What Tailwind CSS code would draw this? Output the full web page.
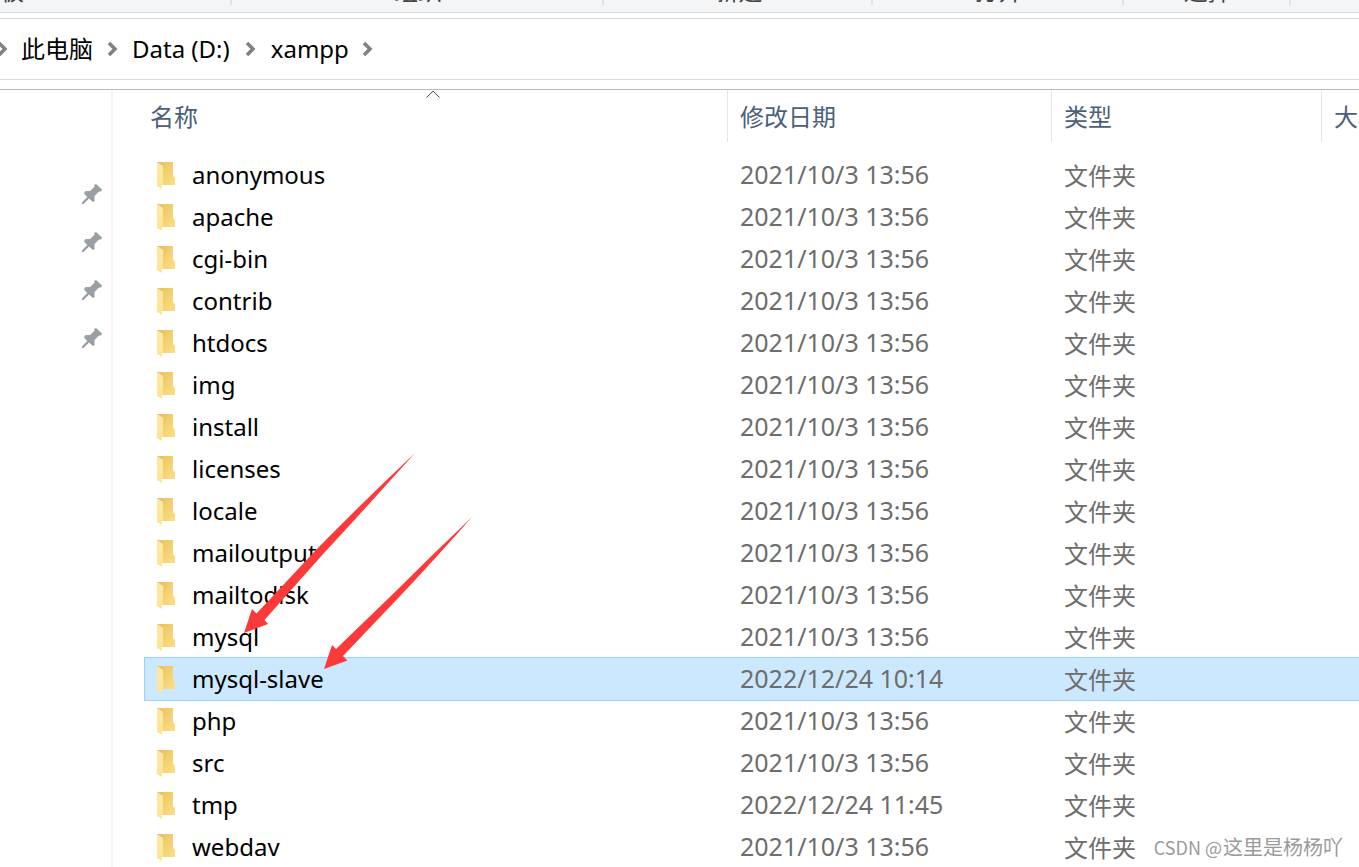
<!DOCTYPE html>
<html lang="zh-CN">
<head>
    <meta charset="UTF-8">
    <meta name="viewport" content="width=device-width, initial-scale=1.0">
    <title>xampp</title>
    <script src="https://cdn.jsdelivr.net/npm/@tailwindcss/browser@4"></script>
</head>
<body class="relative flex flex-col h-screen overflow-hidden bg-white text-black font-['Noto_Sans','Noto_Sans_CJK_SC',sans-serif]">

    <!-- icons -->
    <svg class="absolute w-0 h-0">
        <defs>
            <linearGradient id="folder-back" x1="0" y1="0" x2="1" y2="1">
                <stop offset="0" stop-color="#e9c05c"/>
                <stop offset="1" stop-color="#fddf86"/>
            </linearGradient>
            <linearGradient id="folder-front" x1="0" y1="0" x2="0" y2="1">
                <stop offset="0" stop-color="#ffe9a6"/>
                <stop offset="1" stop-color="#ffe394"/>
            </linearGradient>
        </defs>
        <symbol id="chevron" viewBox="0 0 12 16">
            <path d="M2 2 8 8 2 14" fill="none" stroke="#808080" stroke-width="3.500"/>
        </symbol>
        <symbol id="pin" viewBox="0 0 20 20">
            <path d="M14 0 20 5.500 19 7.500 17 7.500 12.500 12 12.500 17 11 18 7 14.500 1.500 20 0 20 0 18.500 5.200 13 2 9.500 3 7.200 8 7 12.300 3 12.300 1Z" fill="#969fa6"/>
        </symbol>
    </svg>

    <!-- ribbon group names -->
    <div class="flex items-end shrink-0 h-[13px] overflow-hidden bg-[#f4f5f7] border-b border-[#d9d9d9] text-2xl leading-6 text-[#444]">
        <div class="shrink-0 flex items-end justify-center w-[488px] -ml-[256px] h-8 pb-[9px] relative">剪贴板<span class="absolute right-0 bottom-[7px] w-[2px] h-6 bg-[#e1e2e4]"></span></div>
        <div class="shrink-0 flex items-end justify-center w-[372px] h-8 pb-[9px] relative">组织<span class="absolute right-0 bottom-[7px] w-[2px] h-6 bg-[#e1e2e4]"></span></div>
        <div class="shrink-0 flex items-end justify-center w-[269px] h-8 pb-[9px] relative">新建<span class="absolute right-0 bottom-[7px] w-[2px] h-6 bg-[#e1e2e4]"></span></div>
        <div class="shrink-0 flex items-end justify-center w-[251px] h-8 pb-[9px] relative">打开<span class="absolute right-0 bottom-[7px] w-[2px] h-6 bg-[#e1e2e4]"></span></div>
        <div class="shrink-0 flex items-end justify-center w-[167px] h-8 pb-[9px] relative">选择<span class="absolute right-0 bottom-[7px] w-[2px] h-6 bg-[#e1e2e4]"></span></div>
    </div>

    <!-- address bar -->
    <nav class="flex items-center shrink-0 h-[62px] mt-[5px] border-y border-[#d9d9d9] text-2xl">
        <svg class="w-3 h-4 -ml-[3px] mr-3"><use href="#chevron"/></svg>
        <a href="#">此电脑</a>
        <svg class="w-3 h-4 ml-[14px] mr-[13px]"><use href="#chevron"/></svg>
        <a href="#">Data (D:)</a>
        <svg class="w-3 h-4 ml-[15px] mr-[14px]"><use href="#chevron"/></svg>
        <a href="#">xampp</a>
        <svg class="w-3 h-4 ml-[13px]"><use href="#chevron"/></svg>
    </nav>

    <div class="flex grow min-h-0 mt-[9px] border-t border-[#b9b9b9]">
        <aside class="shrink-0 w-[113px] pt-20 pr-[9px] border-r-2 border-[#f5f5f5]">
            <div class="flex items-center justify-end h-12"><svg class="w-5 h-5"><use href="#pin"/></svg></div>
            <div class="flex items-center justify-end h-12"><svg class="w-5 h-5"><use href="#pin"/></svg></div>
            <div class="flex items-center justify-end h-12"><svg class="w-5 h-5"><use href="#pin"/></svg></div>
            <div class="flex items-center justify-end h-12"><svg class="w-5 h-5"><use href="#pin"/></svg></div>
        </aside>

        <main class="grow min-w-0 overflow-hidden pl-8">
            <table class="w-full table-fixed border-separate border-spacing-0 text-left">
                <colgroup>
                    <col class="w-[583px]">
                    <col class="w-[324px]">
                    <col class="w-[270px]">
                    <col>
                </colgroup>
                <thead class="text-2xl text-[#4c607a]">
                    <tr class="h-[52px]">
                        <th class="relative p-0 pl-[5px] pt-px font-normal border-r border-[#e5e5e5]">
                            <svg class="absolute top-0 left-[281px] w-[14px] h-2" viewBox="0 0 14 8"><path d="M.5 7.500 7 1.200 13.500 7.500" fill="none" stroke="#444"/></svg>
                            <button type="button">名称</button>
                        </th>
                        <th class="p-0 pl-3 pt-px font-normal border-r border-[#e5e5e5]"><button type="button">修改日期</button></th>
                        <th class="p-0 pl-3 pt-px font-normal border-r border-[#e5e5e5]"><button type="button">类型</button></th>
                        <th class="p-0 pl-3 pt-px font-normal whitespace-nowrap overflow-hidden"><button type="button">大小</button></th>
                    </tr>
                    <tr class="h-3"><td colspan="4" class="p-0"></td></tr>
                </thead>
                <tbody id="file-list"></tbody>
            </table>
        </main>
    </div>

    <!-- arrows drawn over the list -->
    <svg class="absolute top-0 left-0 w-[500px] h-[700px] pointer-events-none" viewBox="0 0 500 700" fill="#fc3a39">
        <path d="M415 453 Q364 510 324 553 L264.500 620 268 624 244 633 252 609 256.500 613.500 315 551 Q362 503 415 453Z"/>
        <path d="M472 517 Q436 558 402 594 L343 656 347.500 660.500 324 669 332 645 336 649 395 592 Q434 553 472 517Z"/>
    </svg>

    <div class="absolute right-4 bottom-1 flex items-baseline gap-px text-[20px] leading-8 text-[#9a9a9a] font-['Noto_Sans_CJK_SC',sans-serif]">
        <span class="text-[18px]">CSDN @</span><span>这里是杨杨吖</span>
    </div>

    <script>
        const files = [
            ['anonymous', '2021/10/3 13:56'],
            ['apache', '2021/10/3 13:56'],
            ['cgi-bin', '2021/10/3 13:56'],
            ['contrib', '2021/10/3 13:56'],
            ['htdocs', '2021/10/3 13:56'],
            ['img', '2021/10/3 13:56'],
            ['install', '2021/10/3 13:56'],
            ['licenses', '2021/10/3 13:56'],
            ['locale', '2021/10/3 13:56'],
            ['mailoutput', '2021/10/3 13:56'],
            ['mailtodisk', '2021/10/3 13:56'],
            ['mysql', '2021/10/3 13:56'],
            ['mysql-slave', '2022/12/24 10:14'],
            ['php', '2021/10/3 13:56'],
            ['src', '2021/10/3 13:56'],
            ['tmp', '2022/12/24 11:45'],
            ['webdav', '2021/10/3 13:56']
        ];
        const selected = 'mysql-slave';

        document.getElementById('file-list').innerHTML = files.map(([name, date]) => `
            <tr class="h-[42px] text-2xl leading-8 text-[#6d6d6d] ${name === selected ? 'bg-[#cce8ff] outline outline-[#99d1ff]' : ''}">
                <td class="p-0 pl-3">
                    <div class="flex items-center gap-[17px] text-black">
                        <svg class="w-[18px] h-[27px]" viewBox="0 0 18 27">
                            <path d="M0 0H16V14L18 16V23H4Z" fill="url(#folder-back)"/>
                            <path d="M0 0 6 4V22L5 23V27L0 24Z" fill="url(#folder-front)"/>
                        </svg>
                        <span>${name}</span>
                    </div>
                </td>
                <td class="p-0 pl-3 pb-[2px] text-[25px]">${date}</td>
                <td class="p-0 pl-3 pt-px">文件夹</td>
                <td class="p-0"></td>
            </tr>`).join('');
    </script>
</body>
</html>
